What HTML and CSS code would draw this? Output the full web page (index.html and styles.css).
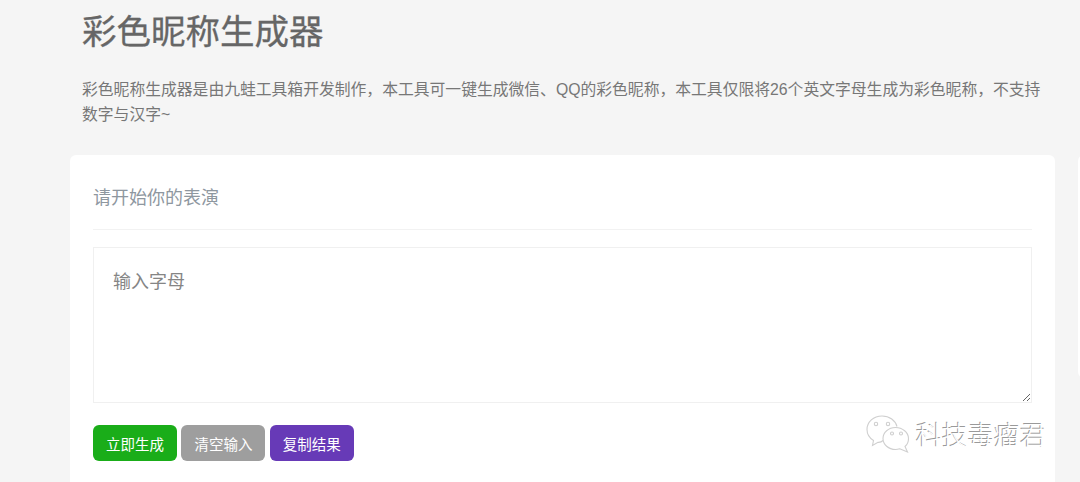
FILE: index.html
```html
<!DOCTYPE html>
<html lang="zh">
<head>
<meta charset="utf-8">
<title>彩色昵称生成器</title>
<link rel="stylesheet" href="styles.css">
</head>
<body>
<div class="page">
  <header class="intro">
    <h1 class="title">彩色昵称生成器</h1>
    <p class="desc">彩色昵称生成器是由九蛙工具箱开发制作，本工具可一键生成微信、QQ的彩色昵称，本工具仅限将26个英文字母生成为彩色昵称，不支持数字与汉字~</p>
  </header>
  <div class="columns">
    <main class="card">
      <div class="card-head">请开始你的表演</div>
      <textarea class="input" placeholder="输入字母"></textarea>
      <div class="actions">
        <button class="btn btn-green">立即生成</button>
        <button class="btn btn-gray">清空输入</button>
        <button class="btn btn-purple">复制结果</button>
      </div>
    </main>
    <aside class="side"></aside>
  </div>
</div>
<div class="watermark">
  <svg class="wm-icon" width="44" height="38" viewBox="0 0 44 38" fill="none" stroke="#cfcfcf" stroke-width="1.1">
    <path d="M17 25.500C15.500 27 14 27.500 12 27.300L6.500 30.500l1-5C3.500 23 1 19 1 14.500 1 7 7.500 1 16 1c7.500 0 13.500 4.500 15 10.500"/>
    <circle cx="10" cy="9" r="1.700"/>
    <circle cx="22" cy="9" r="1.700"/>
    <path d="M29.500 12.500C22.500 12.500 17 17.500 17 23.500S22.500 34.500 29.500 34.500c1.500 0 3-.3 4.300-.7l7.700 3.200-2.500-5.500c2.500-2 3.500-5 3.500-8C42.500 17.500 36.500 12.500 29.500 12.500Z"/>
    <circle cx="26" cy="18.500" r="1.500"/>
    <circle cx="35" cy="18.500" r="1.500"/>
  </svg>
  <span class="wm-text">科技毒瘤君</span>
</div>
</body>
</html>
```

FILE: styles.css
```css
* { box-sizing: border-box; }
html, body { margin: 0; height: 482px; overflow: hidden; }
body {
  position: relative;
  background: #f5f5f5;
  font-family: "Liberation Sans", "Noto Sans CJK SC", sans-serif;
  color: #666;
}
.page { padding-left: 70px; }
.intro { padding: 12px 30px 0 12px; height: 155px; }
.title {
  margin: 0;
  font-size: 34.500px;
  line-height: 40px;
  font-weight: 400;
  color: #666;
  -webkit-text-stroke: 0.3px #666;
}
.desc {
  margin: 25px 0 0;
  font-size: 15.800px;
  line-height: 25px;
  color: #777;
}
.columns { display: flex; gap: 23px; align-items: flex-start; }
.card {
  flex: 0 0 985px;
  height: 340px;
  background: #fff;
  border-radius: 6px;
  padding: 0 23px;
}
.card-head {
  height: 75px;
  line-height: 86px;
  font-size: 18px;
  color: #8e979f;
  border-bottom: 1px solid #f2f2f2;
}
.input {
  display: block;
  width: 100%;
  height: 156px;
  margin-top: 17px;
  padding: 20px 19px;
  border: 1px solid #f0f0f0;
  font-family: inherit;
  font-size: 18px;
  line-height: 28px;
  color: #777;
  background: #fff;
  outline: none;
}
.input::placeholder { color: #858585; opacity: 1; }
.actions { display: flex; gap: 4.400px; margin-top: 22px; }
.btn {
  width: 84px;
  height: 36px;
  padding: 0;
  border: 0;
  border-radius: 6px;
  font-family: inherit;
  font-size: 14.500px;
  color: #fff;
}
.btn-green { background: #1aad19; }
.btn-gray { background: #9e9e9e; }
.btn-purple { background: #673ab7; }
.side {
  flex: 0 0 10px;
  height: 223px;
  background: #fff;
  border-radius: 6px 0 0 6px;
}
.watermark {
  position: absolute;
  left: 866px;
  top: 415px;
  display: flex;
  align-items: center;
  gap: 6px;
}
.wm-text {
  font-size: 26px;
  line-height: 38px;
  color: #fff;
  text-shadow: -1px -1px 0 #9a9a9a;
  font-family: "Noto Sans CJK SC", sans-serif;
  font-weight: 300;
}
```
